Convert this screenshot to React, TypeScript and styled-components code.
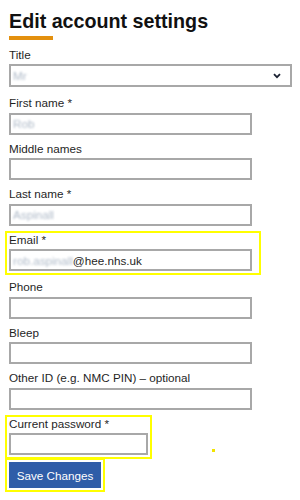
import React from "react";
import styled, { createGlobalStyle } from "styled-components";

const GlobalStyle = createGlobalStyle`
  html, body {
    margin: 0;
    padding: 0;
    background: #ffffff;
  }
  body {
    font-family: "Liberation Sans", Arial, sans-serif;
    color: #1f1f1f;
  }
`;

const Page = styled.div`
  position: relative;
  width: 300px;
  height: 500px;
  padding: 10px 0 0 9px;
  box-sizing: border-box;
  overflow: hidden;
`;

const Heading = styled.h1`
  margin: 0;
  font-size: 19.7px;
  line-height: 22px;
  font-weight: 700;
  color: #111111;
`;

const Bar = styled.div`
  width: 44px;
  height: 4px;
  margin-top: 4px;
  background: #e3900e;
`;

const Form = styled.form`
  display: flex;
  flex-direction: column;
  align-items: flex-start;
  margin-top: 7.5px;
`;

const Field = styled.div<{ $highlight?: boolean; $padRight?: number; $gap?: number }>`
  display: flex;
  flex-direction: column;
  align-items: flex-start;
  margin-bottom: ${({ $gap = 7 }) => $gap}px;
  ${({ $highlight, $padRight = 2 }) =>
    $highlight &&
    `
    margin-left: -2px;
    padding: 0 ${$padRight}px 2px 2px;
    outline: 2px solid #ffff00;
  `}
`;

const Label = styled.label`
  font-size: 11.7px;
  line-height: 14px;
  margin-bottom: 2.5px;
  color: #1f1f1f;
`;

const Box = styled.div<{ $width?: number; $height?: number }>`
  width: ${({ $width = 243 }) => $width}px;
  height: ${({ $height = 22 }) => $height}px;
  box-sizing: border-box;
  border: 2px solid #a8a8a8;
  background: #ffffff;
  display: flex;
  align-items: center;
  padding: 0 2px;
  font-size: 11.7px;
  color: #1f1f1f;
  white-space: nowrap;
`;

const SelectBox = styled(Box)`
  justify-content: space-between;
  padding-right: 9px;
`;

const Hidden = styled.span`
  color: #8c9cb0;
  filter: blur(1px);
  opacity: 0.7;
`;

const Chevron = () => (
  <svg width="8" height="6" viewBox="0 0 8 6" aria-hidden>
    <path d="M1 1.2 L4 4.2 L7 1.2" fill="none" stroke="#1c2233" strokeWidth="1.8" />
  </svg>
);

const ButtonWrap = styled.div`
  margin-top: 5px;
`;

const Button = styled.button`
  width: 92px;
  height: 26px;
  border: none;
  background: #2f5da8;
  color: #ffffff;
  font-family: "Liberation Sans", Arial, sans-serif;
  font-size: 11.7px;
  padding: 0;
  outline: 2px solid #ffff00;
  outline-offset: 2px;
`;

const Dot = styled.div`
  position: absolute;
  left: 212px;
  top: 449px;
  width: 3px;
  height: 3px;
  background: #f2e400;
`;

export default function App() {
  return (
    <>
      <GlobalStyle />
      <Page>
        <Heading>Edit account settings</Heading>
        <Bar />
        <Form onSubmit={(e) => e.preventDefault()}>
          <Field $gap={9}>
            <Label>Title</Label>
            <SelectBox $width={283} $height={23}>
              <Hidden>Mr</Hidden>
              <Chevron />
            </SelectBox>
          </Field>
          <Field>
            <Label>First name *</Label>
            <Box>
              <Hidden>Rob</Hidden>
            </Box>
          </Field>
          <Field>
            <Label>Middle names</Label>
            <Box />
          </Field>
          <Field>
            <Label>Last name *</Label>
            <Box>
              <Hidden>Aspinall</Hidden>
            </Box>
          </Field>
          <Field $highlight $padRight={7}>
            <Label>Email *</Label>
            <Box>
              <Hidden>rob.aspinall</Hidden>
              @hee.nhs.uk
            </Box>
          </Field>
          <Field>
            <Label>Phone</Label>
            <Box />
          </Field>
          <Field>
            <Label>Bleep</Label>
            <Box />
          </Field>
          <Field>
            <Label>Other ID (e.g. NMC PIN) – optional</Label>
            <Box />
          </Field>
          <Field $highlight $padRight={2} $gap={0}>
            <Label>Current password *</Label>
            <Box $width={139} />
          </Field>
          <ButtonWrap>
            <Button type="submit">Save Changes</Button>
          </ButtonWrap>
        </Form>
        <Dot />
      </Page>
    </>
  );
}
